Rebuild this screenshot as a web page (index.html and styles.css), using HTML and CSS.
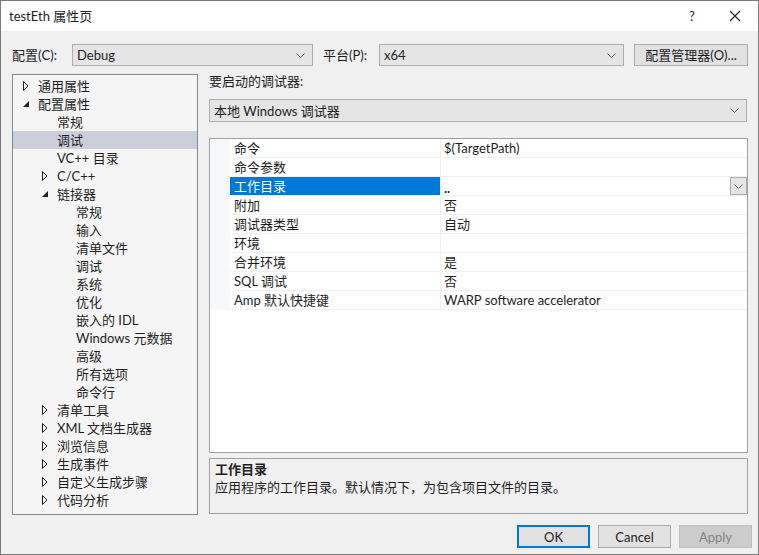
FILE: index.html
```html
<!DOCTYPE html>
<html lang="zh-CN">
<head>
<meta charset="utf-8">
<title>testEth 属性页</title>
<link rel="stylesheet" href="styles.css">
</head>
<body>
<div class="window">
  <div class="titlebar">
    <span class="title">testEth 属性页</span>
    <span class="tb-help">?</span>
    <span class="tb-close"><svg width="12" height="12" viewBox="0 0 12 12"><path d="M1 1L11 11M11 1L1 11" stroke="#1e1e1e" stroke-width="1.1" fill="none"/></svg></span>
  </div>
  <div class="content">
    <div class="toprow">
      <span class="lbl lbl-config">配置(C):</span>
      <div class="combo combo-config"><span>Debug</span><svg class="chev" width="9" height="5" viewBox="0 0 9 5"><path d="M0.5 0.5L4.5 4.5L8.5 0.5" stroke="#606060" fill="none"/></svg></div>
      <span class="lbl lbl-platform">平台(P):</span>
      <div class="combo combo-platform"><span>x64</span><svg class="chev" width="9" height="5" viewBox="0 0 9 5"><path d="M0.5 0.5L4.5 4.5L8.5 0.5" stroke="#606060" fill="none"/></svg></div>
      <div class="btn btn-mgr">配置管理器(O)...</div>
    </div>
    <div class="main">
      <div class="tree">
        <div class="node l0"><span class="arw"><svg width="6" height="10" viewBox="0 0 6 10"><path d="M0.5 0.5L5 5L0.5 9.5Z" stroke="#1e1e1e" fill="none"/></svg></span>通用属性</div>
        <div class="node l0"><span class="arw"><svg width="7" height="10" viewBox="0 0 7 10"><path d="M6 2L6 8L0 8Z" fill="#1e1e1e"/></svg></span>配置属性</div>
        <div class="node l1 leaf">常规</div>
        <div class="node l1 leaf sel">调试</div>
        <div class="node l1 leaf">VC++ 目录</div>
        <div class="node l1"><span class="arw"><svg width="6" height="10" viewBox="0 0 6 10"><path d="M0.5 0.5L5 5L0.5 9.5Z" stroke="#1e1e1e" fill="none"/></svg></span>C/C++</div>
        <div class="node l1"><span class="arw"><svg width="7" height="10" viewBox="0 0 7 10"><path d="M6 2L6 8L0 8Z" fill="#1e1e1e"/></svg></span>链接器</div>
        <div class="node l2 leaf">常规</div>
        <div class="node l2 leaf">输入</div>
        <div class="node l2 leaf">清单文件</div>
        <div class="node l2 leaf">调试</div>
        <div class="node l2 leaf">系统</div>
        <div class="node l2 leaf">优化</div>
        <div class="node l2 leaf">嵌入的 IDL</div>
        <div class="node l2 leaf">Windows 元数据</div>
        <div class="node l2 leaf">高级</div>
        <div class="node l2 leaf">所有选项</div>
        <div class="node l2 leaf">命令行</div>
        <div class="node l1"><span class="arw"><svg width="6" height="10" viewBox="0 0 6 10"><path d="M0.5 0.5L5 5L0.5 9.5Z" stroke="#1e1e1e" fill="none"/></svg></span>清单工具</div>
        <div class="node l1"><span class="arw"><svg width="6" height="10" viewBox="0 0 6 10"><path d="M0.5 0.5L5 5L0.5 9.5Z" stroke="#1e1e1e" fill="none"/></svg></span>XML 文档生成器</div>
        <div class="node l1"><span class="arw"><svg width="6" height="10" viewBox="0 0 6 10"><path d="M0.5 0.5L5 5L0.5 9.5Z" stroke="#1e1e1e" fill="none"/></svg></span>浏览信息</div>
        <div class="node l1"><span class="arw"><svg width="6" height="10" viewBox="0 0 6 10"><path d="M0.5 0.5L5 5L0.5 9.5Z" stroke="#1e1e1e" fill="none"/></svg></span>生成事件</div>
        <div class="node l1"><span class="arw"><svg width="6" height="10" viewBox="0 0 6 10"><path d="M0.5 0.5L5 5L0.5 9.5Z" stroke="#1e1e1e" fill="none"/></svg></span>自定义生成步骤</div>
        <div class="node l1"><span class="arw"><svg width="6" height="10" viewBox="0 0 6 10"><path d="M0.5 0.5L5 5L0.5 9.5Z" stroke="#1e1e1e" fill="none"/></svg></span>代码分析</div>
      </div>
      <div class="right">
        <div class="dbg-label">要启动的调试器:</div>
        <div class="combo combo-dbg"><span>本地 Windows 调试器</span><svg class="chev" width="9" height="5" viewBox="0 0 9 5"><path d="M0.5 0.5L4.5 4.5L8.5 0.5" stroke="#606060" fill="none"/></svg></div>
        <div class="grid">
          <div class="row"><div class="gut"></div><div class="name">命令</div><div class="val">$(TargetPath)</div></div>
          <div class="row"><div class="gut"></div><div class="name">命令参数</div><div class="val"></div></div>
          <div class="row"><div class="gut"></div><div class="name selname">工作目录</div><div class="val valsel"><span class="dots">..</span><span class="ddbtn"><svg width="9" height="5" viewBox="0 0 9 5"><path d="M0.5 0.5L4.5 4.5L8.5 0.5" stroke="#606060" fill="none"/></svg></span></div></div>
          <div class="row"><div class="gut"></div><div class="name">附加</div><div class="val">否</div></div>
          <div class="row"><div class="gut"></div><div class="name">调试器类型</div><div class="val">自动</div></div>
          <div class="row"><div class="gut"></div><div class="name">环境</div><div class="val"></div></div>
          <div class="row"><div class="gut"></div><div class="name">合并环境</div><div class="val">是</div></div>
          <div class="row"><div class="gut"></div><div class="name">SQL 调试</div><div class="val">否</div></div>
          <div class="row"><div class="gut"></div><div class="name">Amp 默认快捷键</div><div class="val">WARP software accelerator</div></div>
        </div>
        <div class="desc">
          <div class="desc-title">工作目录</div>
          <div class="desc-text">应用程序的工作目录。默认情况下，为包含项目文件的目录。</div>
        </div>
      </div>
    </div>
    <div class="buttons">
      <div class="btn btn-ok">OK</div>
      <div class="btn">Cancel</div>
      <div class="btn btn-dis">Apply</div>
    </div>
  </div>
</div>
</body>
</html>
```
FILE: styles.css
```css
* { box-sizing: border-box; }
html, body { margin: 0; padding: 0; }
body {
  font-family: "Lato", "Noto Sans CJK SC", sans-serif;
  font-size: 13px;
  color: #1e1e1e;
  background: #f0f0f0;
}
.window {
  width: 759px;
  height: 555px;
  border: 1px solid #7a7a7a;
  background: #f0f0f0;
  display: flex;
  flex-direction: column;
  overflow: hidden;
}
.titlebar {
  height: 30px;
  background: #ffffff;
  display: flex;
  align-items: center;
  padding-left: 8px;
  flex: none;
}
.title { flex: 1; font-size: 13px; line-height: 16px; }
.tb-help { width: 20px; text-align: center; margin-right: 27px; font-size: 13px; }
.tb-close { width: 12px; height: 12px; margin-right: 17px; display: flex; }
.content {
  flex: 1;
  display: flex;
  flex-direction: column;
  padding: 13px 6px 0 11px;
}
.toprow {
  display: flex;
  align-items: center;
  height: 22px;
}
.lbl { line-height: 22px; }
.lbl-config { width: 60px; }
.lbl-platform { width: 56px; margin-left: 10px; }
.combo {
  height: 22px;
  background: #e5e5e5;
  border: 1px solid #adadad;
  display: flex;
  align-items: center;
  justify-content: space-between;
  padding: 0 7px 0 4px;
  line-height: 20px;
}
.combo-config { width: 241px; }
.combo-platform { width: 245px; }
.chev { flex: none; }
.btn {
  height: 23px;
  background: #e1e1e1;
  border: 1px solid #adadad;
  display: flex;
  align-items: center;
  justify-content: center;
  line-height: 20px;
}
.btn-mgr { width: 114px; height: 22px; margin-left: 10px; }
.main {
  display: flex;
  margin-top: 8px;
  height: 441px;
  margin-right: 5px;
}
.tree {
  width: 186px;
  height: 441px;
  border: 1px solid #828790;
  background: #f5f5f5;
  padding-top: 2px;
  flex: none;
}
.node {
  height: 18px;
  line-height: 18px;
  display: flex;
  align-items: center;
  white-space: nowrap;
}
.node.l0 { padding-left: 10px; }
.node.l1 { padding-left: 29px; }
.node.l2 { padding-left: 48px; }
.node.l1.leaf { padding-left: 44px; }
.node.l2.leaf { padding-left: 63px; }
.arw { width: 15px; display: flex; align-items: center; height: 18px; }
.sel { background: #cccedb; }
.right {
  flex: 1;
  margin-left: 11px;
  display: flex;
  flex-direction: column;
}
.dbg-label { height: 25px; line-height: 14px; }
.combo-dbg { height: 23px; width: 538px; padding-right: 7px; }
.grid {
  margin-top: 16px;
  height: 315px;
  border: 1px solid #a0a0a0;
  background: #ffffff;
  width: 539px;
}
.row {
  display: flex;
  height: 19px;
  border-bottom: 1px solid #f0f0f0;
}
.gut { width: 20px; background: #f7f8fa; flex: none; margin-bottom: -1px; }
.name {
  width: 211px;
  flex: none;
  padding-left: 4px;
  line-height: 18px;
  border-right: 1px solid #f0f0f0;
}
.selname { background: #0078d7; color: #ffffff; }
.val {
  flex: 1;
  padding-left: 3px;
  line-height: 18px;
  display: flex;
  justify-content: space-between;
}
.dots { line-height: 18px; padding-top: 2px; font-weight: bold; }
.ddbtn {
  width: 17px;
  height: 18px;
  background: #e5e5e5;
  border: 1px solid #adadad;
  display: flex;
  align-items: center;
  justify-content: center;
}
.desc {
  margin-top: 5px;
  height: 56px;
  border: 1px solid #a0a0a0;
  background: #f0f0f0;
  padding: 1px 5px;
  width: 539px;
}
.desc-title { font-weight: bold; line-height: 18px; }
.desc-text { line-height: 18px; }
.buttons {
  display: flex;
  justify-content: flex-end;
  gap: 8px;
  margin-top: 10px;
}
.buttons .btn { width: 73px; }
.btn-ok { border: 2px solid #0078d7; }
.btn-dis { background: #cccccc; border-color: #bfbfbf; color: #838383; }
```
